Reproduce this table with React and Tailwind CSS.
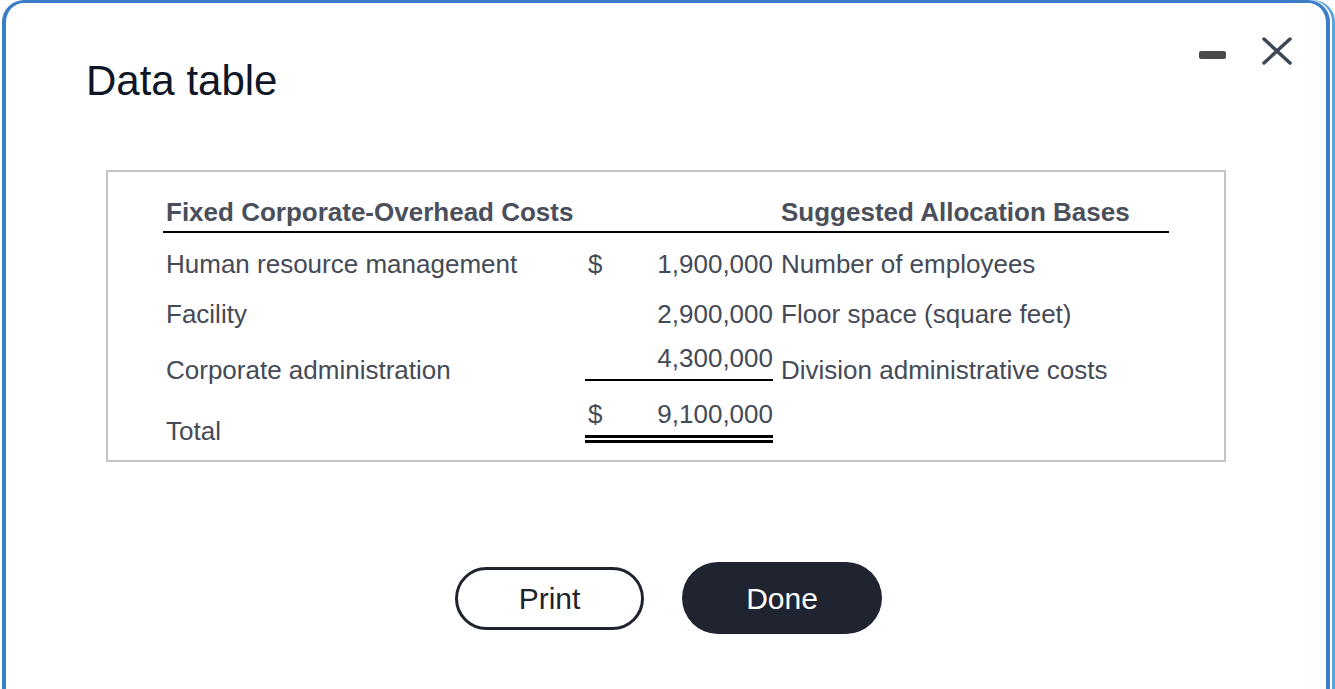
import React from 'react';

const rows = [
    { label: 'Human resource management', dollar: '$', amount: '1,900,000', basis: 'Number of employees' },
    { label: 'Facility', dollar: '', amount: '2,900,000', basis: 'Floor space (square feet)' },
];

const App = () => {
    return (
        <div className="w-[1335px] h-[689px] overflow-hidden bg-white font-['Liberation_Sans',Arial,sans-serif]">
            {/* Dialog window */}
            <div className="ml-[2px] w-[1328px] min-h-[720px] border-x-4 border-t-[3px] border-[#3a7dc9] rounded-t-[22px] bg-white shadow-[2px_0_0_0_#ffffff,5px_0_0_0_#5ba4dc]">

                {/* Title row */}
                <div className="flex items-start justify-between">
                    <h1 className="mt-[54px] ml-[80px] text-[42px] leading-[48px] text-[#0e1627]">Data table</h1>
                    <div className="mt-[34px] mr-[34px] flex items-start gap-[36px]">
                        <div className="mt-[14px] w-[27px] h-[8px] rounded-[2px] bg-[#4a4a4a]" />
                        <svg width="30" height="28" viewBox="0 0 30 28" className="text-[#3e4756]">
                            <path d="M2 2 L28 26 M28 2 L2 26" stroke="currentColor" strokeWidth="3.5" strokeLinecap="round" fill="none" />
                        </svg>
                    </div>
                </div>

                {/* Table box */}
                <div className="mt-[65px] mx-[100px] border-2 border-[#c4c4c4] px-[55px] pt-[21px] pb-[14px] text-[26px] text-[#444a56]">
                    {/* Header */}
                    <div className="flex h-[40px] items-center border-b-2 border-black font-bold text-[#4a4f5b]">
                        <div className="w-[422px] pl-[3px]">Fixed Corporate-Overhead Costs</div>
                        <div className="w-[188px]" />
                        <div className="w-[395px] pl-[8px]">Suggested Allocation Bases</div>
                    </div>

                    {rows.map((r) => (
                        <div key={r.label} className="flex items-start leading-[30px]">
                            <div className="w-[422px] pl-[3px] pt-[16px] pb-[4px]">{r.label}</div>
                            <div className="w-[188px] pt-[16px] pb-[4px] flex justify-between">
                                <span className="pl-[3px]">{r.dollar}</span>
                                <span>{r.amount}</span>
                            </div>
                            <div className="w-[395px] pl-[8px] pt-[16px] pb-[4px] whitespace-nowrap">{r.basis}</div>
                        </div>
                    ))}

                    <div className="flex items-start leading-[30px]">
                        <div className="w-[422px] pl-[3px] pt-[22px]">Corporate administration</div>
                        <div className="w-[188px] pt-[10px] pb-[6px] border-b-2 border-black flex justify-end">
                            <span>4,300,000</span>
                        </div>
                        <div className="w-[395px] pl-[8px] pt-[22px] whitespace-nowrap">Division administrative costs</div>
                    </div>

                    <div className="flex items-start leading-[30px]">
                        <div className="w-[422px] pl-[3px] pt-[31px]">Total</div>
                        <div className="w-[188px] pt-[14px] pb-[6px] border-b-[8px] border-double border-black flex justify-between">
                            <span className="pl-[3px]">$</span>
                            <span>9,100,000</span>
                        </div>
                        <div className="w-[395px]" />
                    </div>
                </div>

                {/* Buttons */}
                <div className="mt-[100px] pl-[5px] flex justify-center items-center gap-[38px]">
                    <button className="w-[189px] h-[63px] rounded-full border-[3px] border-[#1e232e] bg-white text-[30px] text-[#1e232e]">
                        Print
                    </button>
                    <button className="w-[200px] h-[72px] rounded-full bg-[#1f2430] text-[30px] text-white">
                        Done
                    </button>
                </div>
            </div>
        </div>
    );
};

export default App;
